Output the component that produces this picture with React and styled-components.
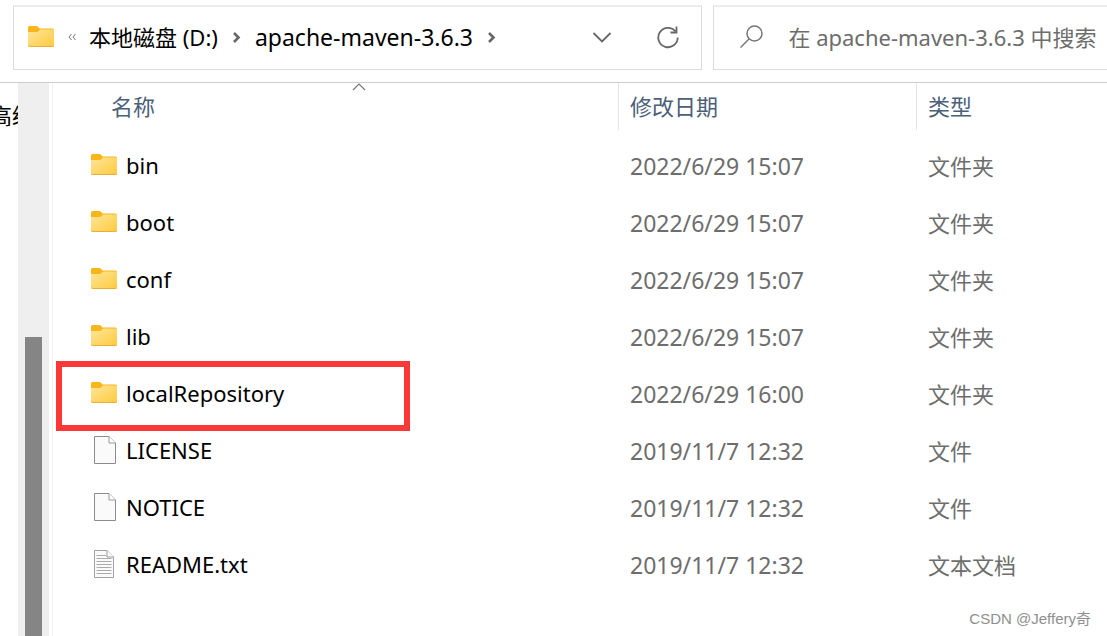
import React from "react";
import styled, { createGlobalStyle } from "styled-components";

const GlobalStyle = createGlobalStyle`
  * {
    box-sizing: border-box;
  }
  body {
    margin: 0;
    background: #fff;
    color: #000;
    font-family: "Noto Sans", "Noto Sans CJK SC", sans-serif;
    font-size: 22px;
    line-height: 32px;
  }
  button, input {
    font: inherit;
    color: inherit;
    background: none;
    border: none;
    padding: 0;
    margin: 0;
  }
`;

const Window = styled.div`
  display: flex;
  flex-direction: column;
  height: 100vh;
  overflow: hidden;
  position: relative;
`;
const Toolbar = styled.header`
  display: flex;
  gap: 11px;
  padding: 5px 0 12px 13px;
  border-bottom: 1px solid #cdcdcd;
`;
const AddressBar = styled.nav`
  display: flex;
  flex: 16;
  align-items: center;
  height: 65px;
  padding: 0 20px 2px 14px;
  border: 1px solid #dcdcdc;
  border-top: 2px solid #ececec;
`;
const Crumb = styled.button`
  font-size: ${(props) => (props.$folder ? "23px" : "22px")};
  white-space: nowrap;
  cursor: pointer;
`;
const Earlier = styled.button`
  display: flex;
  padding: 0 13px 0 14px;
`;
const Separator = styled.svg`
  flex: none;
  margin: 0 14px;
`;
const Actions = styled.div`
  display: flex;
  align-items: center;
  gap: 43px;
  margin-left: auto;
`;
const IconButton = styled.button`
  display: flex;
  cursor: pointer;
`;
const SearchBox = styled.label`
  display: flex;
  flex: 9;
  align-items: center;
  gap: 24px;
  min-width: 0;
  padding: 0 0 2px 25px;
  border: 1px solid #dcdcdc;
  border-top: 2px solid #ececec;
  border-right: none;
`;
const SearchInput = styled.input`
  flex: 1;
  min-width: 0;
  outline: none;
  &::placeholder {
    color: #6d6d6d;
    opacity: 1;
  }
`;
const Body = styled.div`
  display: flex;
  flex: 1;
  min-height: 0;
`;
const TreePane = styled.aside`
  width: 18px;
  padding-top: 16px;
  overflow: hidden;
  white-space: nowrap;
  text-indent: -10px;
`;
const ScrollTrack = styled.div`
  display: flex;
  flex-direction: column;
  justify-content: flex-end;
  width: 31px;
  padding: 0 7px;
  background: #efefef;
`;
const ScrollThumb = styled.div`
  height: 54%;
  background: #858585;
`;
const ListPane = styled.main`
  flex: 1;
  min-width: 0;
  margin-left: 3px;
  border-left: 1px solid #f2f2f2;
`;
const FileTable = styled.table`
  width: 100%;
  table-layout: fixed;
  border-collapse: separate;
  border-spacing: 0;
`;
const Col = styled.col`
  width: ${(props) => props.$width};
`;
const HeadCell = styled.th`
  position: relative;
  height: 47px;
  padding: 0 0 2px ${(props) => (props.$first ? "58px" : "11px")};
  border-left: ${(props) => (props.$first ? "none" : "1px solid #e5e5e5")};
  color: #4c607a;
  font-weight: 400;
  text-align: left;
`;
const SortButton = styled.button`
  display: block;
  cursor: pointer;
`;
const SortMark = styled.svg`
  position: absolute;
  top: 0;
  left: 299px;
`;
const Rows = styled.tbody`
  &::before {
    content: "";
    display: block;
    height: 7px;
  }
`;
const Cell = styled.td`
  height: 57px;
  padding: 0 0 0 12px;
  color: #6d6d6d;
  font-size: ${(props) => (props.$date ? "23px" : "22px")};
`;
const NameCell = styled.td`
  position: relative;
  padding: 0 0 2px 38px;
`;
const FileName = styled.div`
  display: flex;
  align-items: center;
  gap: 9px;
`;
const Highlight = styled.span`
  position: absolute;
  top: -4px;
  left: 3px;
  width: 354px;
  height: 70px;
  border: 6px solid #fb3838;
`;
const Watermark = styled.footer`
  position: absolute;
  right: 16px;
  bottom: 5px;
  color: #8f8f8f;
  font-family: "Liberation Sans", "Noto Sans CJK SC", sans-serif;
  font-size: 15px;
  line-height: 24px;
`;

function FolderIcon() {
  return (
    <svg width="26" height="26" viewBox="0 -1 26 26" aria-hidden="true">
      <defs>
        <linearGradient id="folder" x1="0" y1="0" x2="1" y2="1">
          <stop offset="0" stopColor="#ffe69a" />
          <stop offset="1" stopColor="#ffca3d" />
        </linearGradient>
      </defs>
      <path d="M0 2.5Q0 1 1.5 1H8.5Q10 1 11.5 3.5H24.5Q26 3.5 26 5V8H0Z" fill="#f9b61b" />
      <path d="M0 7H8.5Q10 7 11 5.5Q11.5 4.5 13 4.5H25Q26 4.5 26 5.5V20.5Q26 22 24.5 22H1.5Q0 22 0 20.5Z" fill="url(#folder)" />
      <path d="M0.5 20.5Q0.5 21.5 1.5 21.5H24.5Q25.5 21.5 25.5 20.5" fill="none" stroke="#e9ae35" />
    </svg>
  );
}

function FileIcon({ lines }) {
  const w = lines ? 20 : 22;
  return (
    <svg width="26" height="30" viewBox="-3 0 26 30" aria-hidden="true">
      <path d={`M0.5 1.5H${w - 7}L${w - 0.5} 8V28.5H0.5Z`} fill="#fafafa" stroke={lines ? "#a2a2a2" : "#8c8c8c"} />
      <path d={`M${w - 7} 1.5V8H${w - 0.5}`} fill="#fff" stroke="#999" />
      {lines && <path d="M2.5 6.5H12M2.5 9.5H17.5M2.5 12.5H17.5M2.5 15.5H17.5M2.5 18.5H17.5M2.5 21.5H17.5M2.5 24.5H17.5" stroke="#ababab" />}
    </svg>
  );
}

function Chevron() {
  return (
    <Separator width="9" height="14" viewBox="0 0 9 14" fill="none" stroke="#666" strokeWidth="2.6" aria-hidden="true">
      <path d="M2 3L6.5 7.5L2 12" />
    </Separator>
  );
}

const files = [
  { name: "bin", date: "2022/6/29 15:07", type: "文件夹", icon: "folder" },
  { name: "boot", date: "2022/6/29 15:07", type: "文件夹", icon: "folder" },
  { name: "conf", date: "2022/6/29 15:07", type: "文件夹", icon: "folder" },
  { name: "lib", date: "2022/6/29 15:07", type: "文件夹", icon: "folder" },
  { name: "localRepository", date: "2022/6/29 16:00", type: "文件夹", icon: "folder", marked: true },
  { name: "LICENSE", date: "2019/11/7 12:32", type: "文件", icon: "file" },
  { name: "NOTICE", date: "2019/11/7 12:32", type: "文件", icon: "file" },
  { name: "README.txt", date: "2019/11/7 12:32", type: "文本文档", icon: "text" },
];

function App() {
  return (
    <Window>
      <GlobalStyle />
      <Toolbar>
        <AddressBar>
          <FolderIcon />
          <Earlier aria-label="Earlier folders">
            <svg width="8" height="8" viewBox="0 0 8 8" fill="none" stroke="#777">
              <path d="M3.5 1L1 4L3.5 7M7.5 1L5 4L7.5 7" />
            </svg>
          </Earlier>
          <Crumb>本地磁盘 (D:)</Crumb>
          <Chevron />
          <Crumb $folder>apache-maven-3.6.3</Crumb>
          <Chevron />
          <Actions>
            <IconButton aria-label="Recent locations">
              <svg width="20" height="12" viewBox="0 0 20 12" fill="none" stroke="#666" strokeWidth="1.8">
                <path d="M1.5 2L10 10.5L18.5 2" />
              </svg>
            </IconButton>
            <IconButton aria-label="Refresh">
              <svg width="26" height="24" viewBox="0 0 26 24" fill="none" stroke="#666" strokeWidth="1.8">
                <path d="M20.6 6.5A9.7 9.7 0 1 0 22.7 12.5" />
                <path d="M21.5 1.5V7.5H15.5" />
              </svg>
            </IconButton>
          </Actions>
        </AddressBar>
        <SearchBox>
          <svg width="25" height="26" viewBox="0 0 25 26" fill="none" stroke="#777" strokeWidth="1.5" aria-hidden="true">
            <circle cx="15.5" cy="9.5" r="7.5" />
            <path d="M10 15L1.5 23.5" />
          </svg>
          <SearchInput type="text" aria-label="Search" placeholder="在 apache-maven-3.6.3 中搜索" />
        </SearchBox>
      </Toolbar>
      <Body>
        <TreePane>高级</TreePane>
        <ScrollTrack>
          <ScrollThumb />
        </ScrollTrack>
        <ListPane>
          <FileTable>
            <colgroup>
              <Col $width="auto" />
              <Col $width="298px" />
              <Col $width="191px" />
            </colgroup>
            <thead>
              <tr>
                <HeadCell $first>
                  <SortButton>名称</SortButton>
                  <SortMark width="14" height="8" viewBox="0 0 14 8" fill="none" stroke="#777" strokeWidth="1.2" aria-hidden="true">
                    <path d="M1 7L7 1L13 7" />
                  </SortMark>
                </HeadCell>
                <HeadCell>
                  <SortButton>修改日期</SortButton>
                </HeadCell>
                <HeadCell>
                  <SortButton>类型</SortButton>
                </HeadCell>
              </tr>
            </thead>
            <Rows>
              {files.map((file) => (
                <tr key={file.name}>
                  <NameCell>
                    <FileName>
                      {file.icon === "folder" ? <FolderIcon /> : <FileIcon lines={file.icon === "text"} />}
                      {file.name}
                    </FileName>
                    {file.marked && <Highlight />}
                  </NameCell>
                  <Cell $date>{file.date}</Cell>
                  <Cell>{file.type}</Cell>
                </tr>
              ))}
            </Rows>
          </FileTable>
        </ListPane>
      </Body>
      <Watermark>CSDN @Jeffery奇</Watermark>
    </Window>
  );
}

export default App;
